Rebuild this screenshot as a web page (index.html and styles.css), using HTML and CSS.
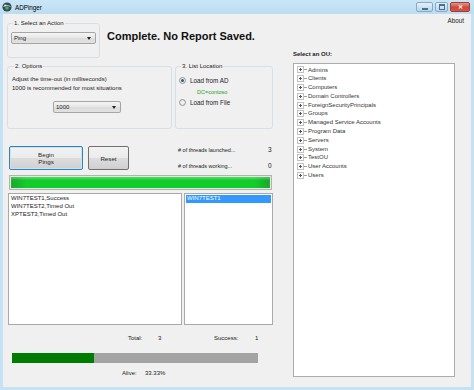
FILE: index.html
```html
<!DOCTYPE html>
<html lang="en">
<head>
  <meta charset="UTF-8">
  <title>ADPinger</title>
  <link rel="stylesheet" href="styles.css">
</head>
<body>
  <div class="window">
    <!-- Titelleiste -->
    <div class="titlebar">
      <svg class="app-icon" width="10" height="10" viewBox="0 0 10 10">
        <circle cx="5" cy="5" r="4.6" fill="#34495a"/>
        <path d="M1.5 4.5 Q5 2 8.5 4.5" stroke="#9fc7df" stroke-width="1" fill="none"/>
        <circle cx="5" cy="6" r="1.8" fill="#4caf50"/>
        <circle cx="3.2" cy="3.4" r="0.9" fill="#e8f2f8"/>
      </svg>
      <span class="caption">ADPinger</span>
      <div class="caption-buttons">
        <span class="cbtn min"></span>
        <span class="cbtn max"></span>
        <span class="cbtn close">&#10005;</span>
      </div>
    </div>

    <div class="client">
      <!-- linke Spalte -->
      <div class="left">
        <div class="top-row">
          <fieldset class="group g-action">
            <legend>1. Select an Action</legend>
            <div class="combo combo-action"><span>Ping</span><i class="arrow"></i></div>
          </fieldset>
          <div class="status">Complete. No Report Saved.</div>
        </div>

        <div class="options-row">
          <fieldset class="group g-options">
            <legend>2. Options</legend>
            <div class="hint">Adjust the time-out (in milliseconds)<br>1000 is recommended for most situations</div>
            <div class="combo combo-timeout"><span>1000</span><i class="arrow"></i></div>
          </fieldset>
          <fieldset class="group g-location">
            <legend>3. List Location</legend>
            <div class="radio-row first"><span class="radio checked"></span>Load from AD</div>
            <div class="dc">DC=contoso</div>
            <div class="radio-row"><span class="radio"></span>Load from File</div>
          </fieldset>
        </div>

        <div class="action-row">
          <button class="btn begin">Begin<br>Pings</button>
          <button class="btn reset">Reset</button>
          <div class="threads">
            <div class="thread-line launched"><span class="t-label"># of threads launched...</span><span>3</span></div>
            <div class="thread-line working"><span class="t-label"># of threads working...</span><span>0</span></div>
          </div>
        </div>

        <div class="progress main-bar"><div class="fill"></div></div>

        <div class="lists">
          <div class="listbox results">
            <div class="item">WIN7TEST1,Success</div>
            <div class="item">WIN7TEST2,Timed Out</div>
            <div class="item">XPTEST3,Timed Out</div>
          </div>
          <div class="listbox hosts">
            <div class="item selected">WIN7TEST1</div>
          </div>
        </div>

        <div class="totals">
          <span class="tot-label">Total:</span><span class="tot-value">3</span>
          <span class="suc-label">Success:</span><span>1</span>
        </div>

        <div class="progress alive-bar"><div class="fill" style="width: 33.33%"></div></div>

        <div class="alive"><span class="alive-label">Alive:</span><span>33.33%</span></div>
      </div>

      <!-- rechte Spalte -->
      <div class="right">
        <div class="menu">About</div>
        <div class="ou-label">Select an OU:</div>
        <div class="tree">
          <div class="node"><i class="plus"></i><i class="dash"></i>Admins</div>
          <div class="node"><i class="plus"></i><i class="dash"></i>Clients</div>
          <div class="node"><i class="plus"></i><i class="dash"></i>Computers</div>
          <div class="node"><i class="plus"></i><i class="dash"></i>Domain Controllers</div>
          <div class="node"><i class="plus"></i><i class="dash"></i>ForeignSecurityPrincipals</div>
          <div class="node"><i class="plus"></i><i class="dash"></i>Groups</div>
          <div class="node"><i class="plus"></i><i class="dash"></i>Managed Service Accounts</div>
          <div class="node"><i class="plus"></i><i class="dash"></i>Program Data</div>
          <div class="node"><i class="plus"></i><i class="dash"></i>Servers</div>
          <div class="node"><i class="plus"></i><i class="dash"></i>System</div>
          <div class="node"><i class="plus"></i><i class="dash"></i>TestOU</div>
          <div class="node"><i class="plus"></i><i class="dash"></i>User Accounts</div>
          <div class="node"><i class="plus"></i><i class="dash"></i>Users</div>
        </div>
      </div>
    </div>
  </div>
</body>
</html>
```

FILE: styles.css
```css
/* Basis */
body {
  margin: 0;
  padding: 0;
  font-family: "Liberation Sans", Arial, sans-serif;
  font-size: 6px;
  color: #222;
  background: #fff;
}
/* Fenster mit Win7-Basic-Rahmen */
.window {
  width: 474px;
  height: 390px;
  background: #c3e2f4;
  display: flex;
  flex-direction: column;
  box-sizing: border-box;
}
.titlebar {
  height: 14px;
  display: flex;
  align-items: center;
  padding: 0 4px 0 2px;
  background: linear-gradient(#c9e6f7, #bcdcf0);
}
.app-icon {
  margin-right: 3px;
}
.caption {
  font-size: 6.3px;
  color: #000;
}
.caption-buttons {
  margin-left: auto;
  display: flex;
  gap: 2px;
  align-self: flex-start;
  margin-top: 2px;
}
.cbtn {
  height: 8px;
  border: 1px solid #8aa9c4;
  border-radius: 2px;
  background: linear-gradient(#e4f1fa, #b7d4ea);
  display: flex;
  align-items: center;
  justify-content: center;
}
.cbtn.min {
  width: 15px;
}
.cbtn.min::after {
  content: "";
  width: 6px;
  height: 2px;
  background: #4a6f93;
  margin-top: 3px;
}
.cbtn.max {
  width: 11px;
}
.cbtn.max::after {
  content: "";
  width: 4px;
  height: 3px;
  border: 1px solid #4a6f93;
  border-top-width: 2px;
}
.cbtn.close {
  width: 18px;
  border-color: #a43c34;
  background: linear-gradient(#e6928a, #c9493c 55%, #d3584b);
  color: #fff;
  font-size: 6px;
  font-weight: bold;
  line-height: 8px;
}
/* Client-Bereich */
.client {
  flex: 1;
  margin: 0 3px 3px 3px;
  background: #f0f0f0;
  display: flex;
}
.left {
  width: 287px;
  padding-left: 4px;
  box-sizing: border-box;
  display: flex;
  flex-direction: column;
}
/* Gruppenboxen */
.group {
  margin: 0;
  padding: 0 3px;
  border: 1px solid #d8dfe4;
  border-radius: 3px;
  box-sizing: border-box;
}
.group legend {
  padding: 0 1px;
  margin-left: 2px;
  line-height: 7px;
}
.top-row {
  display: flex;
  margin-top: 6px;
}
.g-action {
  width: 91px;
  height: 38px;
}
.status {
  margin: 10px 0 0 7px;
  font-size: 11px;
  font-weight: bold;
  line-height: 13px;
  color: #111;
}
/* Kombinationsfelder */
.combo {
  height: 12px;
  box-sizing: border-box;
  border: 1px solid #a5a5a5;
  border-radius: 2px;
  background: linear-gradient(#f5f5f5, #e6e6e6 50%, #dcdcdc 51%, #e1e1e1);
  display: flex;
  align-items: center;
  padding: 0 4px 0 2px;
}
.combo .arrow {
  margin-left: auto;
  width: 0;
  height: 0;
  border-left: 2px solid transparent;
  border-right: 2px solid transparent;
  border-top: 3px solid #222;
}
.combo-action {
  width: 85px;
  margin-top: 5px;
  margin-left: 0;
}
.options-row {
  display: flex;
  margin-top: 5px;
  gap: 3px;
}
.g-options {
  width: 165px;
  height: 66px;
  padding-left: 4px;
}
.hint {
  margin-top: 5px;
  line-height: 9px;
}
.combo-timeout {
  width: 68px;
  margin: 8px 0 0 41px;
}
.g-location {
  width: 98px;
  height: 66px;
  padding-left: 3px;
}
.radio-row {
  display: flex;
  align-items: center;
  height: 9px;
  margin-top: 1px;
  font-size: 6.3px;
}
.radio-row.first {
  margin-top: 6px;
}
.radio {
  width: 7px;
  height: 7px;
  box-sizing: border-box;
  border: 1px solid #979797;
  border-radius: 50%;
  background: radial-gradient(circle, #f6f6f6, #dcdcdc);
  margin-right: 4px;
  display: flex;
  align-items: center;
  justify-content: center;
}
.radio.checked::after {
  content: "";
  width: 3px;
  height: 3px;
  border-radius: 50%;
  background: #2d5b8a;
}
.dc {
  height: 9px;
  line-height: 9px;
  margin: 3px 0 0 18px;
  color: #1fa31f;
  font-size: 5.5px;
}
/* Schaltflächen und Threadzähler */
.action-row {
  display: flex;
  margin-top: 17px;
  height: 24px;
}
.btn {
  height: 24px;
  margin: 0;
  padding: 0;
  font-family: inherit;
  font-size: 6.2px;
  line-height: 7px;
  color: #1e1e1e;
  border: 1px solid #707070;
  border-radius: 2px;
  background: linear-gradient(#f2f2f2, #ebebeb 50%, #dddddd 51%, #cfcfcf);
}
.btn.begin {
  width: 74px;
  margin-left: 2px;
  border-color: #3c7fb1;
  box-shadow: inset 0 0 0 1px #bfe6f9;
}
.btn.reset {
  width: 41px;
  margin-left: 5px;
}
.threads {
  margin-left: 49px;
  width: 95px;
}
.thread-line {
  display: flex;
  height: 8px;
  line-height: 8px;
}
.thread-line.working {
  margin-top: 8px;
}
.t-label {
  width: 90px;
  font-size: 5.5px;
}
.thread-line span:last-child {
  font-size: 6.5px;
}
/* Fortschrittsbalken */
.progress {
  box-sizing: border-box;
}
.main-bar {
  margin: 5px 0 0 2px;
  width: 263px;
  height: 15px;
  border: 1px solid #b2b2b2;
  background: #e6e6e6;
  padding: 1px;
}
.main-bar .fill {
  height: 100%;
  background: linear-gradient(90deg, #17a82a, #13cc2b 6%, #13cc2b 94%, #17a82a);
  box-shadow: inset 0 2px 2px rgba(255, 255, 255, 0.25);
}
.alive-bar {
  margin: 11px 0 0 5px;
  width: 246px;
  height: 10px;
  background: #a3a3a3;
}
.alive-bar .fill {
  height: 100%;
  background: #007d00;
}
/* Listenfelder */
.lists {
  display: flex;
  margin-top: 3px;
  margin-left: 1px;
  height: 132px;
  gap: 2px;
}
.listbox {
  box-sizing: border-box;
  border: 1px solid #a9a9a9;
  background: #fff;
  padding: 1px;
  line-height: 7.8px;
}
.results {
  width: 174px;
}
.results .item {
  padding-left: 1px;
}
.hosts {
  width: 89px;
}
.item.selected {
  background: #3399ff;
  color: #fff;
  padding-left: 1px;
}
.totals {
  display: flex;
  margin-top: 9px;
  height: 8px;
  line-height: 8px;
  padding-left: 121px;
}
.tot-label {
  width: 30px;
}
.tot-value {
  width: 56px;
}
.suc-label {
  width: 41px;
}
.alive {
  display: flex;
  margin-top: 6px;
  height: 8px;
  line-height: 8px;
  padding-left: 115px;
}
.alive-label {
  width: 23px;
}
/* rechte Spalte: Menü und OU-Baum */
.right {
  flex: 1;
  display: flex;
  flex-direction: column;
  padding-left: 3px;
}
.menu {
  text-align: right;
  padding-right: 7px;
  margin-top: 3px;
  line-height: 7px;
  font-size: 6.3px;
}
.ou-label {
  margin-top: 27px;
  font-weight: bold;
  font-size: 6px;
  line-height: 7px;
}
.tree {
  margin-top: 5px;
  width: 162px;
  height: 314px;
  box-sizing: border-box;
  border: 1px solid #acacac;
  background: #fff;
  padding: 1.5px 0 0 3px;
  line-height: 8.8px;
  color: #333;
}
.node {
  display: flex;
  align-items: center;
  height: 8.8px;
}
.plus {
  position: relative;
  width: 7px;
  height: 7px;
  box-sizing: border-box;
  border: 1px solid #c2c2c2;
}
.plus::before {
  content: "";
  position: absolute;
  left: 1px;
  top: 2px;
  width: 3px;
  height: 1px;
  background: #555;
}
.plus::after {
  content: "";
  position: absolute;
  left: 2px;
  top: 1px;
  width: 1px;
  height: 3px;
  background: #555;
}
.dash {
  width: 2px;
  border-top: 1px dotted #a0a0a0;
  margin-right: 2px;
}
```
